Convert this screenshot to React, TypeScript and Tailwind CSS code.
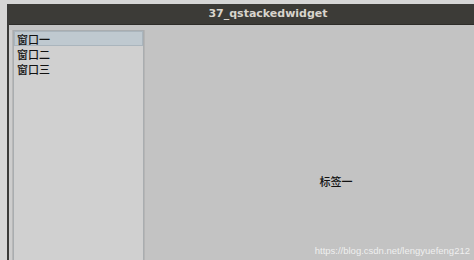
import React from "react";

export default function App() {
  return (
    <div className="w-[474px] h-[260px] overflow-hidden bg-[#d6d6d6] pt-[4px] pl-[7px] relative" style={{ fontFamily: '"DejaVu Sans", "Noto Sans CJK SC", sans-serif' }}>
      <div className="w-[520px] h-[300px] flex flex-col border-l-2 border-[#3a3a38] bg-[#c4c4c4]">
        <div className="h-[21px] shrink-0 bg-[#3c3b37] flex items-center justify-center text-[11px] font-bold text-[#d8d4cc] border-b border-[#2e2d2a]">
          37_qstackedwidget
        </div>
        <div className="flex flex-1 pt-[5px]">
          <div className="w-[4px] bg-[#cdcdcd] border-r border-[#b8b8b8]"></div>
          <div className="w-[131px] h-full border border-[#a9adb0] bg-[#d0d0d0] flex flex-col text-[11px] font-medium text-[#111]" style={{ fontFamily: '"Noto Sans CJK SC", sans-serif' }}>
            <div className="h-[15px] bg-[#bfc9d0] border border-[#aab5bd] pl-[2px] pt-[2px] leading-[11px]">窗口一</div>
            <div className="h-[15px] pl-[3px] pt-[3px] leading-[11px]">窗口二</div>
            <div className="h-[15px] pl-[3px] pt-[3px] leading-[11px]">窗口三</div>
          </div>
          <div className="flex-1 bg-[#c3c3c3] border-l border-[#b5b5b5] flex justify-center pt-[146px]">
            <span className="text-[11px] font-medium text-[#111] leading-none" style={{ fontFamily: '"Noto Sans CJK SC", sans-serif' }}>标签一</span>
          </div>
        </div>
      </div>
      <div className="absolute right-[4px] bottom-[5px] text-[9.5px] text-white/75 leading-none" style={{ fontFamily: '"Liberation Sans", sans-serif' }}>
        https://blog.csdn.net/lengyuefeng212
      </div>
    </div>
  );
}
